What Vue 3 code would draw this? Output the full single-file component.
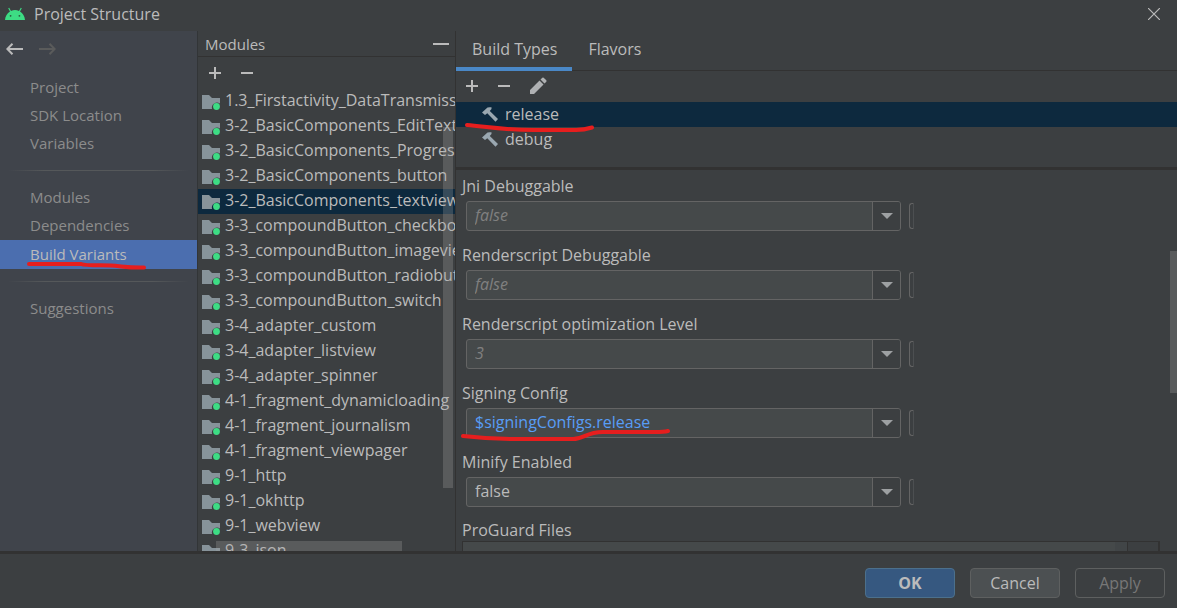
<script setup>
import { ref } from 'vue';

const groups = [
  ['Project', 'SDK Location', 'Variables'],
  ['Modules', 'Dependencies', 'Build Variants'],
  ['Suggestions'],
];
const page = ref('Build Variants');

const modules = [
  '1.3_Firstactivity_DataTransmission',
  '3-2_BasicComponents_EditText',
  '3-2_BasicComponents_ProgressBar',
  '3-2_BasicComponents_button',
  '3-2_BasicComponents_textview',
  '3-3_compoundButton_checkbox',
  '3-3_compoundButton_imageview',
  '3-3_compoundButton_radiobutton',
  '3-3_compoundButton_switch',
  '3-4_adapter_custom',
  '3-4_adapter_listview',
  '3-4_adapter_spinner',
  '4-1_fragment_dynamicloading',
  '4-1_fragment_journalism',
  '4-1_fragment_viewpager',
  '9-1_http',
  '9-1_okhttp',
  '9-1_webview',
  '9-3_json',
];
const currentModule = ref('3-2_BasicComponents_textview');

const tab = ref('Build Types');
const buildTypes = ['release', 'debug'];
const currentType = ref('release');

const fields = ref([
  { id: 'jni', label: 'Jni Debuggable', value: 'false', options: ['false', 'true'], kind: 'default' },
  { id: 'rs', label: 'Renderscript Debuggable', value: 'false', options: ['false', 'true'], kind: 'default' },
  { id: 'rsopt', label: 'Renderscript optimization Level', value: '3', options: ['0', '1', '2', '3'], kind: 'default' },
  { id: 'signing', label: 'Signing Config', value: '$signingConfigs.release', options: ['$signingConfigs.release'], kind: 'link' },
  { id: 'minify', label: 'Minify Enabled', value: 'false', options: ['false', 'true'], kind: '' },
]);
</script>

<template>
  <div class="dialog">
    <header class="titlebar">
      <svg class="android" width="20" height="14" viewBox="0 0 20 14">
        <path d="M0 13C.3 9 2.200 6.200 5 4.500L3.200 1.300 4.200.7 6 3.900a10 10 0 0 1 8 0L15.800.7l1 .6L15 4.500c2.800 1.700 4.700 4.500 5 8.500z" fill="#3ddc84" />
        <circle cx="5.600" cy="8.800" r="0.900" fill="#2b5940" />
        <circle cx="14.400" cy="8.800" r="0.900" fill="#2b5940" />
      </svg>
      <h1>Project Structure</h1>
      <button class="icon close" aria-label="Close">
        <svg width="12" height="12" viewBox="0 0 12 12"><path d="M0 0L12 12M12 0L0 12" stroke="#bbb" stroke-width="1.200" /></svg>
      </button>
    </header>

    <main class="body">
      <nav class="sidebar">
        <div class="history">
          <button class="icon" aria-label="Back">
            <svg width="17" height="12" viewBox="0 0 17 12"><path d="M17 6H1.500M6.500 .8L1.300 6l5.200 5.200" fill="none" stroke="#bbb" stroke-width="2" /></svg>
          </button>
          <button class="icon" aria-label="Forward" disabled>
            <svg width="17" height="12" viewBox="0 0 17 12"><path d="M0 6h15.500M10.500 .8L15.700 6l-5.200 5.200" fill="none" stroke="#5a5b5b" stroke-width="2" /></svg>
          </button>
        </div>
        <ul v-for="(group, i) in groups" :key="i">
          <li v-for="name in group" :key="name">
            <button :class="['nav-item', { active: page === name }]" @click="page = name">{{ name }}</button>
            <svg v-if="name === 'Build Variants'" class="mark mark-nav" width="122" height="10">
              <path d="M3 4H55C60 6 75 5 85 5.500S103 8 118 7.500" />
            </svg>
          </li>
        </ul>
      </nav>

      <section class="modules">
        <div class="modules-head">
          <h2>Modules</h2>
          <button class="icon" aria-label="Hide">
            <svg width="16" height="4"><path d="M0 2h16" stroke="#bbb" stroke-width="2" /></svg>
          </button>
        </div>
        <div class="toolbar">
          <button class="icon" aria-label="Add module">
            <svg width="14" height="14"><path d="M1 7h12M7 1v12" stroke="#bbb" stroke-width="2" /></svg>
          </button>
          <button class="icon" aria-label="Remove module">
            <svg width="14" height="14"><path d="M1 7h12" stroke="#bbb" stroke-width="2" /></svg>
          </button>
        </div>
        <div class="module-list">
          <button
            v-for="name in modules"
            :key="name"
            :class="['module', { selected: currentModule === name }]"
            @click="currentModule = name"
          >
            <svg width="19" height="18" viewBox="0 0 19 18">
              <path d="M0 1h7l3 3h8v5.500A5.200 5.200 0 0 0 10 15H0z" fill="#87939a" />
              <circle cx="14.500" cy="12.500" r="3.400" fill="#3ddc84" />
            </svg>
            <span>{{ name }}</span>
          </button>
          <div class="thumb thumb-v"></div>
          <div class="thumb thumb-h"></div>
        </div>
      </section>

      <section class="details">
        <div class="tabs" role="tablist">
          <button
            v-for="name in ['Build Types', 'Flavors']"
            :key="name"
            role="tab"
            :aria-selected="tab === name"
            :class="['tab', { active: tab === name }]"
            @click="tab = name"
          >{{ name }}</button>
        </div>
        <div class="toolbar wide">
          <button class="icon" aria-label="Add build type">
            <svg width="14" height="14"><path d="M1 7h12M7 1v12" stroke="#bbb" stroke-width="2" /></svg>
          </button>
          <button class="icon" aria-label="Remove build type">
            <svg width="14" height="14"><path d="M1 7h12" stroke="#bbb" stroke-width="2" /></svg>
          </button>
          <button class="icon" aria-label="Rename build type">
            <svg width="18" height="18" viewBox="0 0 18 18">
              <path d="M1 17v-4L10.500 3.500l4 4L5 17zM11.500 2.500L13.300.7q.7-.6 1.400 0l2.600 2.600q.6.7 0 1.400L15.500 6.500z" fill="#afb1b3" />
            </svg>
          </button>
        </div>
        <div class="types">
          <button
            v-for="name in buildTypes"
            :key="name"
            :class="['type', { selected: currentType === name }]"
            @click="currentType = name"
          >
            <svg width="17" height="16" viewBox="0 0 17 16">
              <path d="M0 6.500L5.500 1.500Q7 .9 9.500 1.300V3L7.800 5 16 13 13.500 15.700 5.300 7.300 3 9z" fill="#9aa7b0" />
            </svg>
            <span>{{ name }}</span>
          </button>
          <svg class="mark mark-type" width="132" height="12">
            <path d="M3 3C25 5 40 8 70 8H112Q120 8 128 5.500" />
          </svg>
        </div>

        <div class="form">
          <div v-for="f in fields" :key="f.id" class="field">
            <label :for="f.id">{{ f.label }}</label>
            <div class="row">
              <div class="combo">
                <select :id="f.id" v-model="f.value" :class="f.kind">
                  <option v-for="o in f.options" :key="o">{{ o }}</option>
                </select>
                <span class="arrow"></span>
              </div>
              <span class="extra"></span>
            </div>
            <svg v-if="f.id === 'signing'" class="mark mark-sign" width="212" height="14">
              <path d="M3 10C20 12 35 13 55 13H113C124 13 126 6 143 6H195Q204 6 208 5" />
            </svg>
          </div>
          <div class="field files">
            <span class="caption">ProGuard Files</span>
            <div class="filebox">
              <div class="filebox-main"></div>
              <div class="filebox-side"></div>
            </div>
          </div>
          <div class="thumb thumb-form"></div>
        </div>
      </section>
    </main>

    <footer class="footer">
      <button class="btn primary">OK</button>
      <button class="btn">Cancel</button>
      <button class="btn" disabled>Apply</button>
    </footer>
  </div>
</template>

<style>
body {
  margin: 0;
  background: #3c3f41;
}
</style>

<style scoped>
.dialog {
  display: flex;
  flex-direction: column;
  height: 100vh;
  overflow: hidden;
  background: #3c3f41;
  color: #bbb;
  font: 16px/24px "Open Sans", "Noto Sans", sans-serif;
}
.dialog * {
  box-sizing: border-box;
}
button {
  font: inherit;
  color: inherit;
  background: none;
  border: 0;
  padding: 0;
}
svg {
  display: block;
  flex: none;
}
h1, h2 {
  margin: 0;
  font: inherit;
}
ul {
  list-style: none;
  margin: 0;
  padding: 0;
}
.icon {
  display: flex;
}
.mark {
  position: absolute;
  overflow: visible;
  pointer-events: none;
  z-index: 2;
}
.mark path {
  fill: none;
  stroke: #e61e1e;
  stroke-width: 4;
  stroke-linecap: round;
}

.titlebar {
  display: flex;
  align-items: center;
  flex: none;
  height: 31px;
  padding: 0 17px 3px 5px;
  gap: 9px;
}
.close {
  margin-left: auto;
}

.body {
  display: flex;
  flex: 1;
  min-height: 0;
  border-bottom: 3px solid #323232;
}

.sidebar {
  flex: none;
  width: 198px;
  background: #40444b;
  border-right: 1px solid #323537;
  color: #8c8c8c;
  font-size: 15px;
}
.history {
  display: flex;
  align-items: center;
  gap: 16px;
  height: 43px;
  padding: 0 6px 7px;
}
.sidebar li {
  position: relative;
}
.sidebar ul + ul::before {
  content: "";
  display: block;
  height: 1px;
  margin: 12px 8px 13px;
  background: linear-gradient(90deg, transparent, #55585a 20%, #55585a 80%, transparent);
}
.nav-item {
  display: block;
  width: 100%;
  height: 28px;
  padding: 0 0 2px 30px;
  text-align: left;
}
.nav-item.active {
  height: 29px;
  background: #4b6eaf;
  color: #bbb;
}
.mark-nav {
  left: 26px;
  bottom: -1px;
}

.modules {
  display: flex;
  flex-direction: column;
  flex: none;
  width: 258px;
  border-right: 1px solid #323232;
}
.modules-head {
  display: flex;
  align-items: center;
  justify-content: space-between;
  height: 26px;
  padding: 0 6px 0 7px;
  border-bottom: 1px solid #323232;
}
.modules-head h2 {
  font-size: 15px;
}
.toolbar {
  display: flex;
  align-items: center;
  gap: 18px;
  height: 32px;
  padding: 0 10px;
}
.module-list {
  position: relative;
  flex: 1;
  min-height: 0;
  overflow: hidden;
}
.module {
  display: flex;
  align-items: flex-end;
  gap: 4px;
  width: 100%;
  height: 25px;
  padding: 0 0 2px 4px;
  white-space: nowrap;
}
.selected {
  background: #0d293e;
}
.thumb {
  position: absolute;
  background: rgba(166, 166, 166, 0.28);
}
.thumb-v {
  top: 38px;
  right: 2px;
  width: 10px;
  height: 361px;
}
.thumb-h {
  left: 18px;
  bottom: 0;
  width: 186px;
  height: 10px;
}

.details {
  display: flex;
  flex-direction: column;
  flex: 1;
  min-width: 0;
}
.tabs {
  display: flex;
  flex: none;
  height: 40px;
  border-bottom: 1px solid #323232;
}
.tab {
  height: 40px;
  padding: 0 15px 4px 16px;
}
.tab.active {
  border-bottom: 4px solid #4a88c7;
  padding-bottom: 0;
}
.toolbar.wide {
  flex: none;
  height: 31px;
  padding: 0 9px 2px;
}
.types {
  position: relative;
  flex: none;
  height: 68px;
  border-bottom: 3px solid #323232;
}
.type {
  display: flex;
  align-items: center;
  gap: 6px;
  width: 100%;
  height: 25px;
  padding: 0 0 1px 26px;
}
.mark-type {
  left: 8px;
  top: 20px;
}

.form {
  position: relative;
  flex: 1;
  min-height: 0;
  padding: 4px 17px 0 6px;
  overflow: hidden;
}
.field {
  position: relative;
  height: 69px;
}
.field label,
.caption {
  display: block;
  height: 27px;
}
.row {
  display: flex;
  align-items: center;
  gap: 8px;
  padding-left: 4px;
}
.combo {
  position: relative;
  flex: 0 1 435px;
}
.combo select {
  appearance: none;
  display: block;
  width: 100%;
  height: 30px;
  margin: 0;
  padding: 0 36px 2px 8px;
  font: inherit;
  color: #bbb;
  background: #45494a;
  border: 1px solid #646464;
  border-radius: 3px;
}
.combo select.default {
  color: #808080;
  font-style: italic;
}
.combo select.link {
  color: #589df6;
}
.arrow {
  position: absolute;
  top: 1px;
  right: 1px;
  bottom: 1px;
  width: 28px;
  display: flex;
  align-items: center;
  justify-content: center;
  background: #3c3f41;
  border-left: 1px solid #646464;
  border-radius: 0 2px 2px 0;
  pointer-events: none;
}
.arrow::after {
  content: "";
  border: 6px solid transparent;
  border-top-color: #9da0a2;
  border-bottom: 0;
}
.extra {
  width: 5px;
  height: 26px;
  border: 1px solid #646464;
  border-right-color: #4c4f51;
  border-radius: 3px 0 0 3px;
}
.mark-sign {
  left: -2px;
  top: 45px;
}
.field.files {
  margin-top: -1px;
}
.files .caption {
  height: 23px;
}
.filebox {
  display: flex;
  height: 60px;
  border: 1px solid #323232;
  border-right-width: 2px;
}
.filebox-main {
  flex: 1;
  background: #45494a;
}
.filebox-side {
  width: 43px;
  background: linear-gradient(90deg, #414547 12px, #323232 12px, #323232 13px, #3c3f41 13px);
}
.thumb-form {
  top: 81px;
  right: 0;
  width: 7px;
  height: 142px;
}

.footer {
  display: flex;
  align-items: center;
  justify-content: flex-end;
  flex: none;
  gap: 15px;
  height: 54px;
  padding: 3px 12px 0;
}
.btn {
  width: 90px;
  height: 30px;
  background: #4c5052;
  border: 1px solid #5e6060;
  border-radius: 4px;
}
.btn.primary {
  background: #365880;
  border-color: #4c708c;
  font-weight: 700;
}
.btn:disabled {
  background: none;
  color: #777;
}
</style>
